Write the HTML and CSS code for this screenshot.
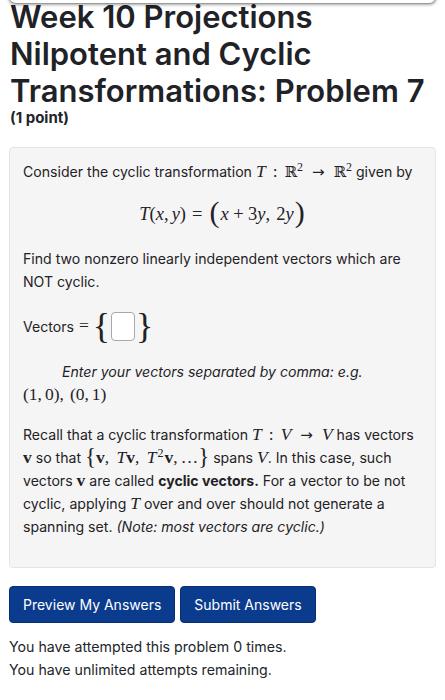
FILE: index.html
```html
<!DOCTYPE html>
<html>
<head>
<meta charset="utf-8">
<link rel="stylesheet" href="styles.css">
</head>
<body>
<div class="topbar"></div>
<main class="page">
  <h1 class="title">Week 10 Projections Nilpotent and Cyclic Transformations: Problem 7</h1>
  <div class="points">(1 point)</div>
  <section class="card">
    <p class="p1">Consider the cyclic transformation <span class="m"><i>T</i><span class="rel">:</span><span class="bb">ℝ</span><sup>2</sup><span class="rel arr">→</span><span class="bb">ℝ</span><sup>2</sup></span> given by</p>
    <div class="display"><span class="m"><i>T</i>(<i>x</i>,<span class="thin"></span><i>y</i>)<span class="rel">=</span><span class="bigp">(</span><i>x</i><span class="bin">+</span>3<i>y</i>,<span class="quad"></span>2<i>y</i><span class="bigp">)</span></span></div>
    <p class="p2">Find two nonzero linearly independent vectors which are NOT cyclic.</p>
    <div class="answer">Vectors<span class="m eq">=</span><span class="brace">{</span><span class="box"></span><span class="brace">}</span></div>
    <p class="hint"><em>Enter your vectors separated by comma: e.g.</em><br><span class="m">(1,<span class="thin"></span>0),<span class="quad"></span>(0,<span class="thin"></span>1)</span></p>
    <p class="p3">Recall that a cyclic transformation <span class="m"><i>T</i><span class="rel">:</span><i>V</i><span class="rel arr">→</span><i>V</i></span> has vectors <span class="m"><b>v</b></span> so that <span class="m"><span class="medb">{</span><b>v</b>,<span class="thin"></span> <i>T</i><b>v</b>,<span class="thin"></span> <i>T</i><sup class="sp">2</sup><b>v</b>,<span class="thin"></span>…<span class="medb">}</span></span> spans <span class="m"><i>V</i></span>. In this case, such vectors <span class="m"><b>v</b></span> are called <strong>cyclic vectors.</strong> For a vector to be not cyclic, applying <span class="m"><i>T</i></span> over and over should not generate a spanning set. <em>(Note: most vectors are cyclic.)</em></p>
  </section>
  <div class="buttons">
    <button class="btn">Preview My Answers</button>
    <button class="btn">Submit Answers</button>
  </div>
  <p class="attempts">You have attempted this problem 0 times.<br>You have unlimited attempts remaining.</p>
</main>
</body>
</html>
```
FILE: styles.css
```css
html, body {
  margin: 0;
  padding: 0;
  background: #fff;
}
body {
  font-family: Inter, "Noto Sans", "Liberation Sans", sans-serif;
  color: #212529;
  position: relative;
  overflow: hidden;
}
.topbar {
  position: absolute;
  left: 8px;
  right: 8px;
  top: -40px;
  height: 42px;
  background: #fff;
  border: 1px solid #9a9a9a;
  border-radius: 0 0 8px 8px;
  box-shadow: 0 1px 3px rgba(0,0,0,0.35);
  z-index: 2;
}
.page {
  padding: 0 9px;
}
.title {
  margin: -2px 0 0 1px;
  font-size: 31px;
  line-height: 37px;
  font-weight: 600;
  color: #1f2226;
}
.points {
  font-size: 15px;
  font-weight: 700;
  line-height: 20px;
  margin-top: -1px;
  margin-left: 1px;
}
.card {
  margin-top: 19px;
  background: #f5f5f5;
  border: 1px solid #e4e4e4;
  border-radius: 4px;
  padding: 12px 13px 29px 13px;
  font-size: 14.1px;
  line-height: 23px;
  color: #1f2226;
}
.card p {
  margin: 0;
}
.m {
  font-family: "Liberation Serif", "DejaVu Serif", serif;
  font-size: 17.5px;
  line-height: 0;
}
.m i {
  font-style: italic;
}
.m sup {
  font-size: 12px;
  line-height: 0;
  vertical-align: 6px;
}
.m .sp {
  margin: 0 1px 0 1px;
}
.rel {
  margin: 0 7px;
}
.arr {
  font-family: "DejaVu Sans", sans-serif;
  font-size: 15px;
  margin: 0 9px;
}
.bin {
  margin: 0 4.5px;
}
.thin {
  display: inline-block;
  width: 3px;
}
.quad {
  display: inline-block;
  width: 6px;
}
.bb {
  font-family: "DejaVu Serif", serif;
  font-size: 15px;
}
.display {
  text-align: center;
  margin: 16px 0 16px;
  height: 32px;
  line-height: 32px;
}
.display .m {
  font-size: 18.5px;
}
.display .rel {
  margin: 0 6px;
}
.bigp {
  font-size: 30px;
  vertical-align: -2px;
  line-height: 0;
  margin: 0 1px;
}
.answer {
  margin-top: 16px;
  display: flex;
  align-items: center;
  height: 34px;
}
.eq {
  margin: 0 4px 0 5px;
  line-height: 1;
}
.brace {
  font-family: "Liberation Serif", serif;
  font-size: 36px;
  line-height: 34px;
  color: #222;
}
.box {
  display: inline-block;
  width: 22px;
  height: 27px;
  background: #fff;
  border: 1px solid #a8a8a8;
  border-radius: 4px;
  margin: 0 1px;
}
.hint {
  margin-top: 17px !important;
  text-indent: 39px;
}
.hint .m {
  display: inline-block;
  text-indent: 0;
  line-height: 23px;
}
.p3 {
  margin-top: 17px !important;
}
.medb {
  font-size: 23px;
  vertical-align: -1px;
  line-height: 0;
}
.buttons {
  display: flex;
  gap: 5px;
  margin-top: 18px;
}
.btn {
  font-family: Inter, "Noto Sans", "Liberation Sans", sans-serif;
  font-size: 14px;
  color: #fff;
  background: #0a3b8d;
  border: 1px solid #082f73;
  border-radius: 4px;
  height: 37px;
  padding: 0 13px;
  cursor: pointer;
}
.attempts {
  margin: 12px 0 0 0;
  font-size: 14.2px;
  line-height: 23px;
  color: #212529;
}
```
